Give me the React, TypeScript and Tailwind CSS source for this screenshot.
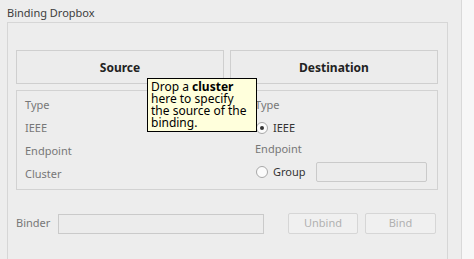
const font = { fontFamily: '"Noto Sans", "DejaVu Sans", sans-serif' };

const Radio = ({ checked }: { checked?: boolean }) => (
  <span className="w-[12px] h-[12px] rounded-full border border-[#a8a8a8] bg-[#fbfbfb] flex items-center justify-center shrink-0">
    {checked && <span className="w-[4px] h-[4px] rounded-full bg-[#333]" />}
  </span>
);

export default function App() {
  return (
    <div className="w-[474px] h-[259px] overflow-hidden flex bg-[#ededed] text-[11px]" style={font}>
      <div className="w-[462px] shrink-0 border-r border-[#d9d9d9] flex flex-col">
        <div className="pl-[7px] pt-[5px] h-[22px] leading-[16px] text-[#3c3c3c]">Binding Dropbox</div>

        <div className="ml-[7px] w-[441px] flex-1 border border-[#d6d6d6] border-b-0 pl-[8px] pr-[9px] pt-[27px] relative">
          {/* header buttons */}
          <div className="flex gap-[6px] h-[34px] text-[12px]">
            <div className="w-[208px] border border-[#cfcfcf] bg-[#ececec] flex items-center justify-center pt-[2px] font-bold text-[#222]">
              Source
            </div>
            <div className="flex-1 border border-[#cfcfcf] bg-[#ececec] flex items-center justify-center pt-[2px] font-bold text-[#222]">
              Destination
            </div>
          </div>

          {/* endpoints panel */}
          <div className="mt-[6px] h-[100px] border border-[#d2d2d2] flex">
            <div className="w-[230px] pl-[8px] pt-[6px] flex flex-col text-[#777]">
              <div className="h-[23px] leading-[16px]">Type</div>
              <div className="h-[23px] leading-[16px]">IEEE</div>
              <div className="h-[23px] leading-[16px]">Endpoint</div>
              <div className="h-[23px] leading-[16px]">Cluster</div>
            </div>
            <div className="flex-1 pl-[8px] pt-[6px] flex flex-col text-[#777]">
              <div className="h-[23px] leading-[16px]">Type</div>
              <div className="h-[21px] flex items-start gap-[5px] text-[#333]">
                <span className="mt-[2px] ml-[1px]"><Radio checked /></span>
                <span className="leading-[16px]">IEEE</span>
              </div>
              <div className="h-[21px] leading-[16px]">Endpoint</div>
              <div className="flex items-center gap-[5px] text-[#333]">
                <span className="ml-[1px]"><Radio /></span>
                <span className="leading-[16px] w-[38px]">Group</span>
                <div className="w-[111px] h-[20px] border border-[#cacaca] bg-[#ececec] rounded-[2px]" />
              </div>
            </div>
          </div>

          {/* binder row */}
          <div className="mt-[23px] flex items-center h-[21px]">
            <span className="w-[42px] text-[#777]">Binder</span>
            <div className="w-[206px] h-[20px] border border-[#cacaca] bg-[#ececec]" />
            <div className="ml-[24px] w-[70px] h-[21px] border border-[#d6d6d6] rounded-[2px] bg-[#f0f0f0] flex items-center justify-center text-[#b0b0b0]">
              Unbind
            </div>
            <div className="ml-[7px] w-[71px] h-[21px] border border-[#d6d6d6] rounded-[2px] bg-[#f0f0f0] flex items-center justify-center text-[#b0b0b0]">
              Bind
            </div>
          </div>

          {/* tooltip */}
          <div className="absolute left-[139px] top-[55px] w-[110px] h-[54px] border border-black bg-[#ffffdc] text-black text-[12px] leading-[12px] px-[3px] pt-[2px]">
            Drop a <b>cluster</b>
            <br />
            here to specify
            <br />
            the source of the
            <br />
            binding.
          </div>
        </div>
      </div>
      <div className="flex-1 bg-[#f7f7f7]" />
    </div>
  );
}
